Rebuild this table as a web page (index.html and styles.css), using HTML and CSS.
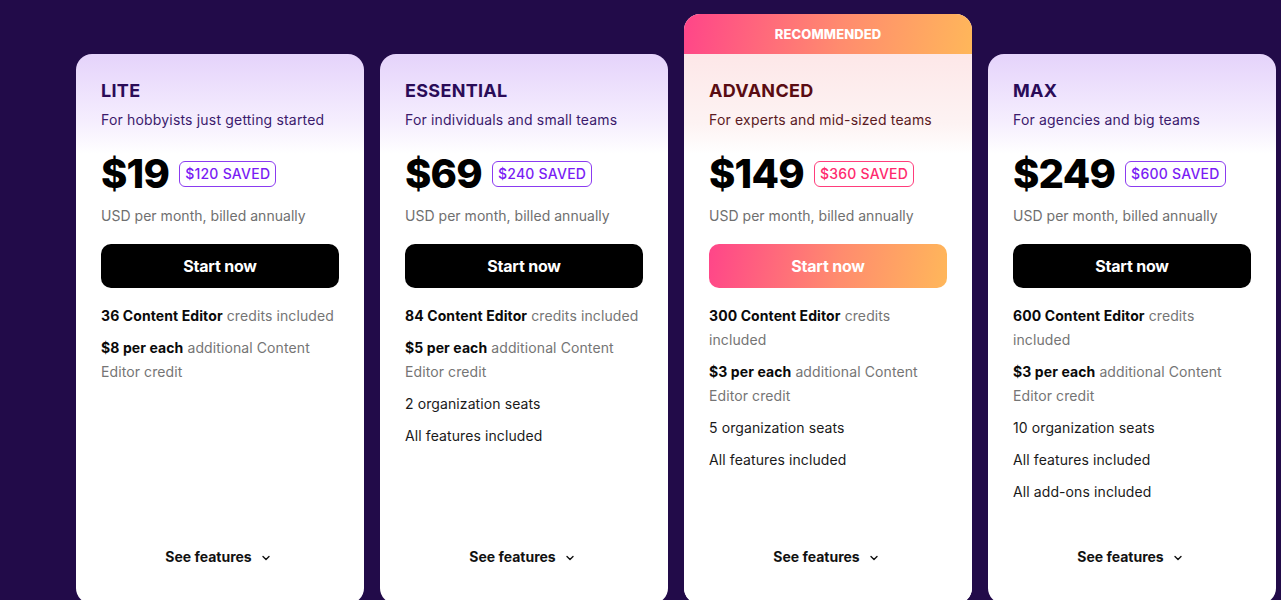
FILE: index.html
```html
<!DOCTYPE html>
<html lang="en">
<head>
<meta charset="utf-8">
<title>Pricing</title>
<link rel="stylesheet" href="styles.css">
</head>
<body>
<div class="plans">
  <div class="card">
    <div class="body">
      <h2 class="name">LITE</h2>
      <p class="tag">For hobbyists just getting started</p>
      <div class="price-row"><span class="price">$19</span><span class="saved">$120 SAVED</span></div>
      <p class="billing">USD per month, billed annually</p>
      <a class="btn">Start now</a>
      <ul class="features">
        <li><b>36 Content Editor</b> credits included</li>
        <li><b>$8 per each</b> additional Content Editor credit</li>
      </ul>
      <div class="more">See features <svg width="10" height="10" viewBox="0 0 10 10"><path d="M2 3.5 L5 6.5 L8 3.5" fill="none" stroke="#111" stroke-width="1.4" stroke-linecap="round" stroke-linejoin="round"/></svg></div>
    </div>
  </div>
  <div class="card">
    <div class="body">
      <h2 class="name">ESSENTIAL</h2>
      <p class="tag">For individuals and small teams</p>
      <div class="price-row"><span class="price">$69</span><span class="saved">$240 SAVED</span></div>
      <p class="billing">USD per month, billed annually</p>
      <a class="btn">Start now</a>
      <ul class="features">
        <li><b>84 Content Editor</b> credits included</li>
        <li><b>$5 per each</b> additional Content Editor credit</li>
        <li class="plain">2 organization seats</li>
        <li class="plain">All features included</li>
      </ul>
      <div class="more">See features <svg width="10" height="10" viewBox="0 0 10 10"><path d="M2 3.5 L5 6.5 L8 3.5" fill="none" stroke="#111" stroke-width="1.4" stroke-linecap="round" stroke-linejoin="round"/></svg></div>
    </div>
  </div>
  <div class="card featured">
    <div class="ribbon">RECOMMENDED</div>
    <div class="body">
      <h2 class="name">ADVANCED</h2>
      <p class="tag">For experts and mid-sized teams</p>
      <div class="price-row"><span class="price">$149</span><span class="saved">$360 SAVED</span></div>
      <p class="billing">USD per month, billed annually</p>
      <a class="btn">Start now</a>
      <ul class="features">
        <li><b>300 Content Editor</b> credits included</li>
        <li><b>$3 per each</b> additional Content Editor credit</li>
        <li class="plain">5 organization seats</li>
        <li class="plain">All features included</li>
      </ul>
      <div class="more">See features <svg width="10" height="10" viewBox="0 0 10 10"><path d="M2 3.5 L5 6.5 L8 3.5" fill="none" stroke="#111" stroke-width="1.4" stroke-linecap="round" stroke-linejoin="round"/></svg></div>
    </div>
  </div>
  <div class="card">
    <div class="body">
      <h2 class="name">MAX</h2>
      <p class="tag">For agencies and big teams</p>
      <div class="price-row"><span class="price">$249</span><span class="saved">$600 SAVED</span></div>
      <p class="billing">USD per month, billed annually</p>
      <a class="btn">Start now</a>
      <ul class="features">
        <li><b>600 Content Editor</b> credits included</li>
        <li><b>$3 per each</b> additional Content Editor credit</li>
        <li class="plain">10 organization seats</li>
        <li class="plain">All features included</li>
        <li class="plain">All add-ons included</li>
      </ul>
      <div class="more">See features <svg width="10" height="10" viewBox="0 0 10 10"><path d="M2 3.5 L5 6.5 L8 3.5" fill="none" stroke="#111" stroke-width="1.4" stroke-linecap="round" stroke-linejoin="round"/></svg></div>
    </div>
  </div>
</div>
</body>
</html>
```
FILE: styles.css
```css
html, body {
  margin: 0;
  padding: 0;
  height: 600px;
  overflow: hidden;
  background: #220b49;
  font-family: Inter, "Noto Sans", sans-serif;
}
.plans {
  display: flex;
  gap: 16px;
  padding: 14px 0 0 76px;
  align-items: flex-start;
}
.card {
  width: 288px;
  margin-top: 40px;
  border-radius: 16px;
  overflow: hidden;
  background: #fff;
  flex-shrink: 0;
}
.card.featured {
  margin-top: 0;
}
.ribbon {
  height: 40px;
  display: flex;
  align-items: center;
  justify-content: center;
  color: #fff;
  font-weight: 800;
  font-size: 13px;
  letter-spacing: 0.1px;
  background: linear-gradient(100deg, #ff4589 0%, #ff8c6e 55%, #ffb75a 100%);
}
.body {
  height: 550px;
  box-sizing: border-box;
  padding: 24px 25px 37px 25px;
  display: flex;
  flex-direction: column;
  background: linear-gradient(180deg, #e5d3fb 0px, #f6effe 70px, #ffffff 100px);
}
.featured .body {
  background: linear-gradient(180deg, #fde7e8 0px, #fdf3f3 70px, #ffffff 100px);
}
.name {
  margin: 0;
  font-size: 18px;
  line-height: 26px;
  font-weight: 700;
  color: #2a0b58;
  letter-spacing: 0.3px;
}
.tag {
  margin: 6px 0 0;
  font-size: 14px;
  line-height: 20px;
  color: #3b1a6c;
  letter-spacing: 0.18px;
}
.featured .name { color: #5a0c12; }
.featured .tag { color: #5b1a1f; }
.price-row {
  margin-top: 20px;
  height: 48px;
  display: flex;
  align-items: center;
}
.price {
  font-size: 40px;
  line-height: 48px;
  font-weight: 800;
  color: #000;
  letter-spacing: -0.8px;
}
.saved {
  margin-left: 10px;
  margin-top: -1px;
  height: 26px;
  box-sizing: border-box;
  border: 1px solid #8b3bf0;
  border-radius: 6px;
  padding: 0 5px;
  font-size: 14px;
  line-height: 24px;
  font-weight: 500;
  color: #7a1cf5;
  letter-spacing: 0.25px;
}
.featured .saved {
  border-color: #ff3d7c;
  color: #ff2a6e;
}
.billing {
  margin: 8px 0 0;
  font-size: 14px;
  line-height: 20px;
  color: #6f6f6f;
  letter-spacing: 0.03px;
}
.btn {
  display: flex;
  align-items: center;
  justify-content: center;
  margin-top: 18px;
  height: 44px;
  border-radius: 10px;
  background: #000;
  color: #fff;
  font-weight: 700;
  font-size: 16px;
  letter-spacing: -0.2px;
}
.featured .btn {
  background: linear-gradient(100deg, #ff4589 0%, #ff8c6e 55%, #ffb75a 100%);
}
.features {
  list-style: none;
  margin: 16px 0 0;
  padding: 0;
  flex: 1;
  display: flex;
  flex-direction: column;
  gap: 8px;
}
.features li {
  font-size: 14px;
  line-height: 24px;
  color: #757575;
  letter-spacing: 0.1px;
}
.features li b {
  font-weight: 700;
  color: #0a0a0a;
}
.features li.plain {
  color: #1a1a1a;
}
.more {
  display: flex;
  align-items: center;
  justify-content: center;
  gap: 9px;
  font-size: 14px;
  line-height: 20px;
  font-weight: 700;
  color: #111;
  margin-right: 4px;
}
.more svg {
  margin-top: 1px;
}
```
